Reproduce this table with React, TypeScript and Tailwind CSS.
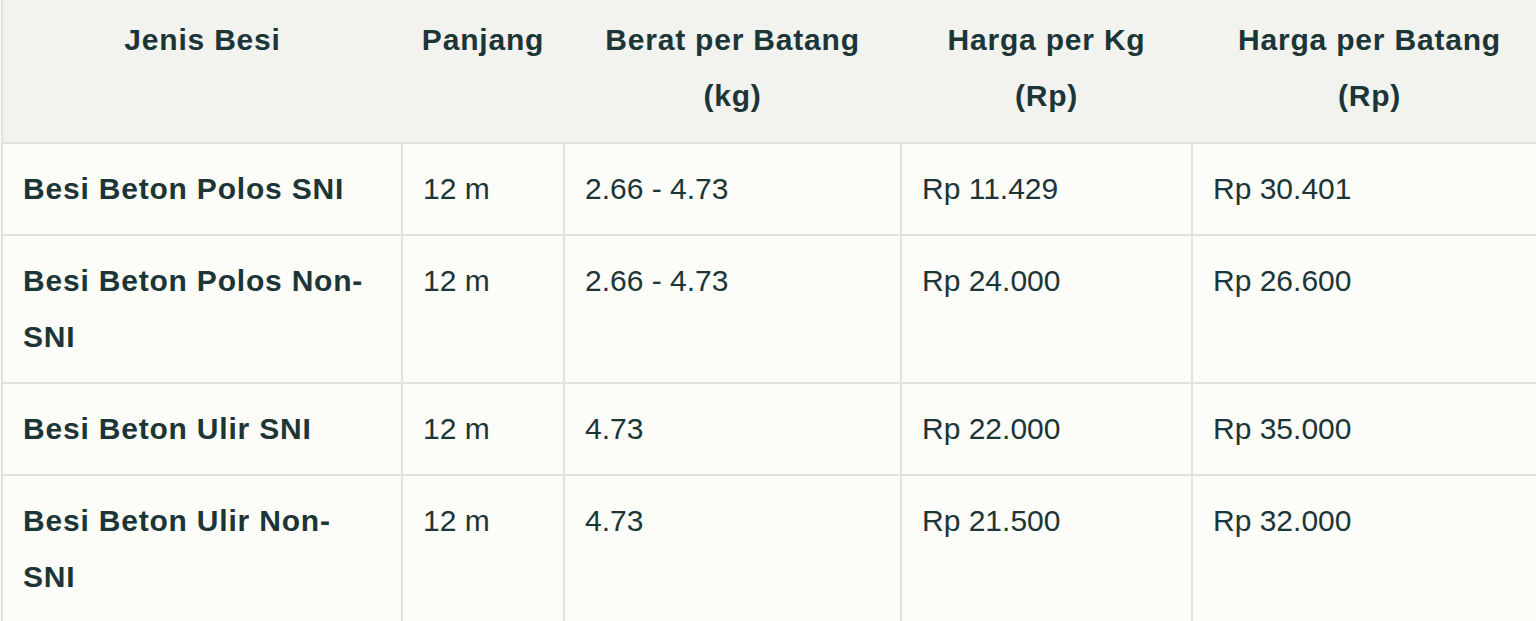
const rows = [
  { jenis: "Besi Beton Polos SNI", panjang: "12 m", berat: "2.66 - 4.73", kg: "Rp 11.429", batang: "Rp 30.401" },
  { jenis: "Besi Beton Polos Non-SNI", panjang: "12 m", berat: "2.66 - 4.73", kg: "Rp 24.000", batang: "Rp 26.600" },
  { jenis: "Besi Beton Ulir SNI", panjang: "12 m", berat: "4.73", kg: "Rp 22.000", batang: "Rp 35.000" },
  { jenis: "Besi Beton Ulir Non-SNI", panjang: "12 m", berat: "4.73", kg: "Rp 21.500", batang: "Rp 32.000" },
];

const headers: [string, string?][] = [
  ["Jenis Besi"],
  ["Panjang"],
  ["Berat per Batang", "(kg)"],
  ["Harga per Kg", "(Rp)"],
  ["Harga per Batang", "(Rp)"],
];

export default function App() {
  return (
    <div className="h-[621px] w-[1536px] overflow-hidden bg-[#fcfcf9] pl-[1px] font-['Liberation_Sans',Arial,sans-serif] text-[#1c3537]">
      <table className="w-[1545px] table-fixed border-collapse text-[30px] leading-[56px]">
        <colgroup>
          <col className="w-[400px]" />
          <col className="w-[162px]" />
          <col className="w-[337px]" />
          <col className="w-[291px]" />
          <col className="w-[355px]" />
        </colgroup>
        <thead>
          <tr className="bg-[#f2f2ee]">
            {headers.map(([a, b], i) => (
              <th
                key={a}
                className={`border-b-2 border-[#e2e2dc] px-2 pt-[12px] pb-[18px] text-center align-top font-bold tracking-[0.8px] ${
                  i === 0 ? "border-l-2" : ""
                }`}
              >
                {a}
                {b && <br />}
                {b}
              </th>
            ))}
          </tr>
        </thead>
        <tbody>
          {rows.map((r) => (
            <tr key={r.jenis}>
              <td className="border-b-2 border-l-2 border-[#e2e2dc] pl-5 pr-7 py-[17px] align-top font-bold tracking-[0.8px]">{r.jenis}</td>
              <td className="border-b-2 border-l-2 border-[#e2e2dc] px-5 py-[17px] align-top">{r.panjang}</td>
              <td className="border-b-2 border-l-2 border-[#e2e2dc] px-5 py-[17px] align-top">{r.berat}</td>
              <td className="border-b-2 border-l-2 border-[#e2e2dc] px-5 py-[17px] align-top">{r.kg}</td>
              <td className="border-b-2 border-l-2 border-[#e2e2dc] px-5 py-[17px] align-top">{r.batang}</td>
            </tr>
          ))}
        </tbody>
      </table>
    </div>
  );
}
